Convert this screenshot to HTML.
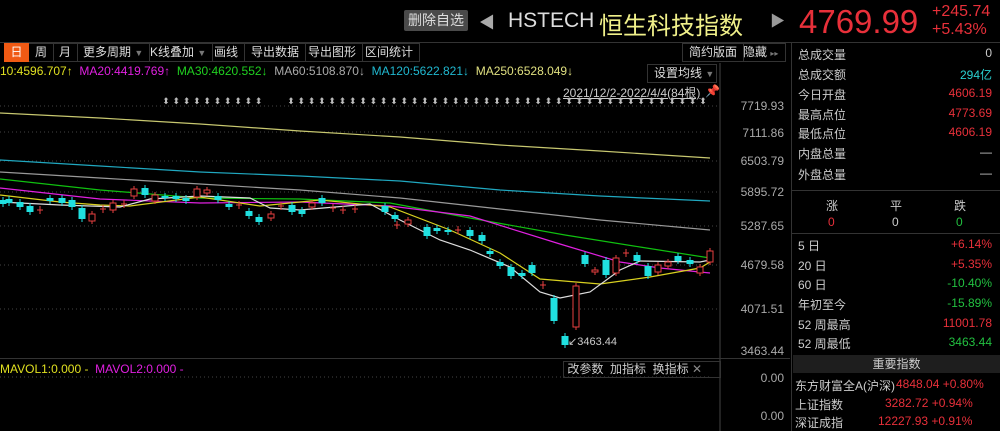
<!DOCTYPE html>
<html><head><meta charset="utf-8"><style>
*{margin:0;padding:0;box-sizing:border-box}
body{width:1000px;height:431px;background:#000;overflow:hidden;position:relative;font-family:"Liberation Sans","Noto Sans CJK SC",sans-serif;color:#ccc;font-size:12px}
.a{position:absolute;white-space:nowrap}
.tb{position:absolute;top:43px;height:19px;border:1px solid #333;border-left:none;line-height:17px;padding:0 6px;font-size:12px;color:#ddd;white-space:nowrap}
.r{position:absolute;left:798px;width:194px;height:19px;font-size:12px;color:#ccc}
.r span{position:absolute;right:0}
.red{color:#e8303a}.grn{color:#22c040}.cy{color:#2ad0d0}
</style></head><body>
<div class="a" style="left:0;top:42px;width:1000px;height:1px;background:#333"></div>
<div class="a" style="left:404px;top:10px;width:64px;height:21px;background:#4a4a4a;border-radius:2px;color:#ddd;font-size:14px;line-height:21px;text-align:center">删除自选</div>
<div class="a" style="left:479px;top:9px;color:#aaa;font-size:16px">◀</div>
<div class="a" style="left:508px;top:9px;color:#ddd;font-size:21px">HSTECH</div>
<div class="a" style="left:599px;top:6px;color:#f0f08a;font-size:24px">恒生科技指数</div>
<div class="a" style="left:770px;top:10px;color:#999;font-size:15px">▶</div>
<div class="a" style="left:799px;top:3px;color:#e8303a;font-size:33px">4769.99</div>
<div class="a" style="left:932px;top:3px;color:#e8303a;font-size:16px">+245.74</div>
<div class="a" style="left:932px;top:21px;color:#e8303a;font-size:16px">+5.43%</div>

<div class="a" style="left:4px;top:43px;width:25px;height:19px;background:#f05a14;color:#fff;text-align:center;line-height:19px">日</div>
<div class="tb" style="left:29px">周</div>
<div class="tb" style="left:53px">月</div>
<div class="tb" style="left:77px">更多周期 <span style="color:#777;font-size:9px">▼</span></div>
<div class="tb" style="left:144px">K线叠加 <span style="color:#777;font-size:9px">▼</span></div>
<div class="tb" style="left:208px">画线</div>
<div class="tb" style="left:245px">导出数据</div>
<div class="tb" style="left:302px">导出图形</div>
<div class="tb" style="left:359px">区间统计</div>
<div class="tb" style="left:682px;border-left:1px solid #333">简约版面</div>
<div class="tb" style="left:739px;width:47px;padding:0 4px">隐藏 <span style="color:#777;font-size:8px">▸▸</span></div>

<div class="a" style="left:0;top:64px;font-size:12px"><span style="color:#e0e020">10:4596.707↑</span> &nbsp;<span style="color:#e020e0">MA20:4419.769↑</span> &nbsp;<span style="color:#20d020">MA30:4620.552↓</span> &nbsp;<span style="color:#aaa">MA60:5108.870↓</span> &nbsp;<span style="color:#20b8d0">MA120:5622.821↓</span> &nbsp;<span style="color:#e0e080">MA250:6528.049↓</span></div>
<div class="a" style="left:647px;top:64px;width:70px;height:19px;border:1px solid #333;color:#ddd;padding-left:6px;line-height:17px">设置均线 <span style="color:#777;font-size:9px">▼</span></div>
<div class="a" style="left:563px;top:84px;color:#ccc;text-decoration:underline">2021/12/2-2022/4/4(84根)</div>
<div class="a" style="left:705px;top:84px;color:#888">📌</div>

<svg class="a" style="left:0;top:0" width="1000" height="431" id="s">
<g stroke="#444" stroke-dasharray="1,3">
<line x1="0" x2="720" y1="106" y2="106"/><line x1="0" x2="720" y1="132" y2="132"/><line x1="0" x2="720" y1="161" y2="161"/><line x1="0" x2="720" y1="192" y2="192"/><line x1="0" x2="720" y1="226" y2="226"/><line x1="0" x2="720" y1="265" y2="265"/><line x1="0" x2="720" y1="309" y2="309"/>
<line x1="0" x2="710" y1="377" y2="377"/>
</g>
<line x1="720" x2="720" y1="63" y2="431" stroke="#444"/>
<line x1="791.5" x2="791.5" y1="43" y2="431" stroke="#333"/>
<line x1="0" x2="790" y1="358.5" y2="358.5" stroke="#333"/>
<g fill="#aaa" font-size="12" text-anchor="end" font-family="Liberation Sans">
<text x="784" y="110">7719.93</text><text x="784" y="137">7111.86</text><text x="784" y="165">6503.79</text><text x="784" y="196">5895.72</text><text x="784" y="230">5287.65</text><text x="784" y="269">4679.58</text><text x="784" y="313">4071.51</text><text x="784" y="355">3463.44</text>
<text x="784" y="382">0.00</text><text x="784" y="420">0.00</text>
</g>
<g fill="none" stroke-width="1.2">
<polyline stroke="#c8c870" points="0,113 100,118 200,124 300,131 400,137 500,145 600,151 710,158"/>
<polyline stroke="#20a8c0" points="0,160 100,166 200,172 300,176 400,181 500,190 600,196 710,201"/>
<polyline stroke="#999" points="0,172 100,178 200,184 300,190 400,198 500,209 600,220 710,230"/>
<polyline stroke="#10c010" points="0,179 100,190 200,198 300,199 390,203 470,218 565,235 640,247 710,258"/>
<polyline stroke="#e020e0" points="0,188 100,199 200,203 300,202 390,206 470,216 560,244 620,262 660,268 710,273"/>
<polyline stroke="#d8d020" points="0,195 60,202 100,205 130,206 200,197 260,206 320,200 390,207 450,230 500,253 540,279 600,284 650,277 700,268 710,262"/>
<polyline stroke="#ddd" points="0,202 60,205 120,207 150,199 200,196 250,198 270,208 300,210 370,204 400,220 440,240 470,250 510,267 540,292 560,298 590,292 620,270 640,261 700,262 710,260"/>
</g>
<g id="c"></g>
<text x="568" y="345" fill="#ccc" font-size="11" font-family="Liberation Sans">↙3463.44</text>
</svg>

<div class="a" style="left:0;top:362px;font-size:12px"><span style="color:#e0e020">MAVOL1:0.000 -</span> &nbsp;<span style="color:#e020e0">MAVOL2:0.000 -</span></div>
<div class="a" style="left:563px;top:361px;width:158px;height:17px;border:1px solid #333;color:#ccc;font-size:12px;line-height:15px">&nbsp;改参数 &nbsp;加指标 &nbsp;换指标 <span style="color:#888">✕</span></div>

<div class="r" style="top:46px">总成交量<span>0</span></div>
<div class="r" style="top:66px">总成交额<span class="cy">294亿</span></div>
<div class="r" style="top:86px">今日开盘<span class="red">4606.19</span></div>
<div class="r" style="top:106px">最高点位<span class="red">4773.69</span></div>
<div class="r" style="top:125px">最低点位<span class="red">4606.19</span></div>
<div class="r" style="top:145px">内盘总量<span>—</span></div>
<div class="r" style="top:166px">外盘总量<span>—</span></div>
<div class="a" style="left:792px;top:190px;width:208px;height:1px;background:#333"></div>
<div class="a" style="left:826px;top:197px">涨</div><div class="a" style="left:890px;top:197px">平</div><div class="a" style="left:954px;top:197px">跌</div>
<div class="a red" style="left:828px;top:215px">0</div><div class="a" style="left:892px;top:215px">0</div><div class="a grn" style="left:956px;top:215px">0</div>
<div class="a" style="left:792px;top:233px;width:208px;height:1px;background:#333"></div>
<div class="r" style="top:237px">5 日<span class="red">+6.14%</span></div>
<div class="r" style="top:257px">20 日<span class="red">+5.35%</span></div>
<div class="r" style="top:276px">60 日<span class="grn">-10.40%</span></div>
<div class="r" style="top:296px">年初至今<span class="grn">-15.89%</span></div>
<div class="r" style="top:316px">52 周最高<span class="red">11001.78</span></div>
<div class="r" style="top:335px">52 周最低<span class="grn">3463.44</span></div>
<div class="a" style="left:793px;top:355px;width:207px;height:18px;background:#1e1e1e;text-align:center;line-height:18px;color:#ccc">重要指数</div>
<div class="a" style="left:795px;top:377px">东方财富全A(沪深)</div><div class="a red" style="left:896px;top:377px">4848.04 +0.80%</div>
<div class="a" style="left:795px;top:396px">上证指数</div><div class="a red" style="left:885px;top:396px">3282.72 +0.94%</div>
<div class="a" style="left:795px;top:414px">深证成指</div><div class="a red" style="left:878px;top:414px">12227.93 +0.91%</div>

<script>
var C=[[3,'c',200,204],[9,'c',199,203],[20,'c',202,207],[30,'c',206,212],[40,'x',210],[50,'c',198,201],[62,'c',198,203],[72,'c',200,207],[82,'c',208,219],[92,'r',214,221],[103,'x',209],[113,'r',203,210],[124,'x',204],[134,'r',189,196],[145,'c',188,195],[155,'r',195,201],[165,'c',196,198],[176,'c',196,199],[186,'c',198,201],[197,'r',189,197],[207,'r',190,193],[218,'c',196,200],[229,'c',204,207],[239,'x',205],[249,'c',211,216],[259,'c',217,222],[271,'r',214,218],[281,'x',206],[292,'c',205,212],[302,'c',210,214],[312,'r',203,207],[322,'c',198,203],[333,'x',208],[343,'x',210],[355,'x',209],[385,'c',206,212],[395,'c',215,219],[397,'x',225],[408,'r',220,224],[427,'c',227,236],[437,'c',228,231],[448,'c',230,232],[458,'x',230],[470,'c',230,236],[482,'c',235,241],[490,'c',251,254],[500,'c',262,266],[511,'c',267,276],[522,'c',273,276],[532,'c',265,273],[543,'x',285],[554,'c',298,321],[565,'c',336,345],[576,'r',286,327],[585,'c',255,264],[595,'r',270,272],[606,'c',260,275],[616,'r',258,273],[626,'x',253],[637,'c',255,261],[648,'c',266,276],[658,'r',265,272],[668,'r',262,266],[678,'c',256,261],[690,'c',260,264],[700,'r',267,273],[710,'r',251,262]];
var h='';
C.forEach(function(k){var x=k[0];
if(k[1]=='x'){h+='<line x1="'+(x-3)+'" x2="'+(x+3)+'" y1="'+k[2]+'" y2="'+k[2]+'" stroke="#e84040"/><line x1="'+x+'" x2="'+x+'" y1="'+(k[2]-4)+'" y2="'+(k[2]+4)+'" stroke="#e84040"/>';}
else if(k[1]=='c'){h+='<line x1="'+x+'" x2="'+x+'" y1="'+(k[2]-3)+'" y2="'+(k[3]+3)+'" stroke="#20e0e0"/><rect x="'+(x-3.5)+'" y="'+k[2]+'" width="7" height="'+(k[3]-k[2])+'" fill="#20e0e0"/>';}
else{h+='<line x1="'+x+'" x2="'+x+'" y1="'+(k[2]-3)+'" y2="'+(k[3]+3)+'" stroke="#e84040"/><rect x="'+(x-3)+'" y="'+k[2]+'" width="6" height="'+(k[3]-k[2])+'" fill="#000" stroke="#e84040"/>';}
});
for(var x=166;x<262;x+=10.3)h+='<text x="'+x+'" y="104" fill="#bbb" font-size="9" text-anchor="middle">⬍</text>';
for(var x=291;x<705;x+=10.3)h+='<text x="'+x+'" y="104" fill="#bbb" font-size="9" text-anchor="middle">⬍</text>';
document.getElementById('c').innerHTML=h;
</script>
</body></html>
